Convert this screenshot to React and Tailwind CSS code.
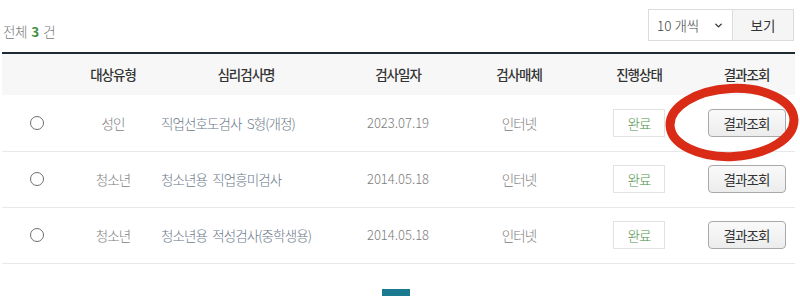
import { ChevronDown } from "lucide-react";

const rows = [
  { target: "성인", name: "직업선호도검사 S형(개정)", date: "2023.07.19", media: "인터넷" },
  { target: "청소년", name: "청소년용 직업흥미검사", date: "2014.05.18", media: "인터넷" },
  { target: "청소년", name: "청소년용 적성검사(중학생용)", date: "2014.05.18", media: "인터넷" },
];

const App = () => {
  return (
    <div
      className="relative w-[800px] h-[296px] overflow-hidden bg-white"
      style={{ fontFamily: '"Noto Sans CJK KR", "Noto Sans", sans-serif' }}
    >
      {/* top bar */}
      <div className="flex justify-between pt-[9px] pl-[3px] pr-[6px] h-[52px]">
        <span className="mt-[12px] text-[13.5px] leading-[20px] text-[#7a7a7a] font-light tracking-[-0.5px] [word-spacing:2px]">
          전체 <b className="font-bold text-[#3f8f3f]">3</b> 건
        </span>
        <div className="flex h-[32px]">
          <div className="flex items-center justify-between w-[85px] border border-[#dcdcdc] bg-white pl-[8px] pr-[8px] text-[13.5px] text-[#444] font-light">
            <span>10 개씩</span>
            <ChevronDown size={11} strokeWidth={3} className="text-[#333]" />
          </div>
          <button className="w-[61px] border border-l-0 border-[#dcdcdc] bg-[#f5f5f5] text-[13.5px] text-[#333]">
            보기
          </button>
        </div>
      </div>

      {/* table */}
      <table className="ml-[2px] w-[793px] table-fixed border-collapse border-t-2 border-[#1f2b33] text-[13.5px]">
        <colgroup>
          <col className="w-[70px]" />
          <col className="w-[82px]" />
          <col className="w-[184px]" />
          <col className="w-[120px]" />
          <col className="w-[122px]" />
          <col className="w-[118px]" />
          <col className="w-[97px]" />
        </colgroup>
        <thead>
          <tr className="h-[42px] bg-[#f7f7f7] text-[#333] tracking-[-1px]">
            <th></th>
            <th className="font-medium">대상유형</th>
            <th className="font-medium">심리검사명</th>
            <th className="font-medium">검사일자</th>
            <th className="font-medium">검사매체</th>
            <th className="font-medium">진행상태</th>
            <th className="font-medium">결과조회</th>
          </tr>
        </thead>
        <tbody>
          {rows.map((r, i) => (
            <tr key={i} className="h-[56px] border-b border-[#e8e8e8] text-[#7c7c7c] font-light">
              <td>
                <div className="mx-auto w-[14px] h-[14px] rounded-full border border-[#6f6f6f] bg-white" />
              </td>
              <td className="text-center tracking-[-0.9px]">{r.target}</td>
              <td className="pl-[7px] text-left text-[#6c7989] whitespace-nowrap tracking-[-0.9px] [word-spacing:3px]">{r.name}</td>
              <td className="text-center text-[13px]">{r.date}</td>
              <td className="text-center tracking-[-0.9px]">{r.media}</td>
              <td>
                <div className="mx-auto flex items-center justify-center w-[52px] h-[28px] border border-[#e2e2e2] text-[#4f9247] tracking-[-0.9px]">
                  완료
                </div>
              </td>
              <td>
                <button className="mx-auto flex items-center justify-center w-[78px] h-[28px] rounded-[4px] border border-[#a8a8a8] bg-gradient-to-b from-[#fafafa] to-[#ececec] text-[#333] font-normal tracking-[-0.9px]">
                  결과조회
                </button>
              </td>
            </tr>
          ))}
        </tbody>
      </table>

      {/* pagination */}
      <div className="flex justify-center mt-[25px]">
        <div className="w-[28px] h-[28px] bg-[#1c7a90] -translate-x-[4px]" />
      </div>

      {/* red marker around first result button */}
      <svg className="absolute left-[664px] top-[81px]" width="136" height="84" viewBox="0 0 136 84">
        <ellipse
          cx="68"
          cy="41.5"
          rx="62"
          ry="34"
          fill="none"
          stroke="#d92b16"
          strokeWidth="9"
          transform="rotate(-3 68 41.5)"
        />
      </svg>
    </div>
  );
};

export default App;
